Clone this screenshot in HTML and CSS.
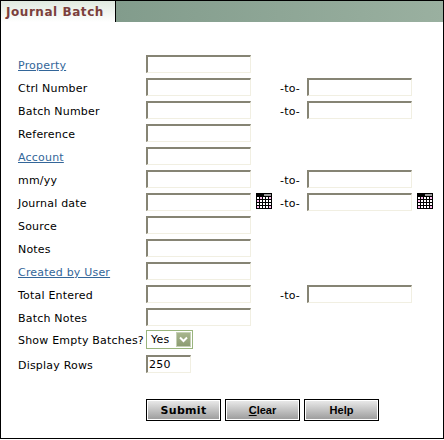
FILE: index.html
```html
<!DOCTYPE html>
<html lang="en">
<head>
<meta charset="utf-8">
<title>Journal Batch</title>
<link rel="stylesheet" href="styles.css">
</head>
<body>
<svg width="0" height="0" class="defs">
  <symbol id="cal" viewBox="0 0 16 16">
    <rect width="16" height="16" fill="#000"/>
    <rect x="8" y="1" width="7" height="2" fill="#999"/>
    <g fill="#fff">
      <rect x="1" y="4" width="2" height="2"/><rect x="4" y="4" width="2" height="2" fill="#fbe"/><rect x="7" y="4" width="2" height="2"/><rect x="10" y="4" width="2" height="2"/><rect x="13" y="4" width="2" height="2" fill="#fbe"/>
      <rect x="1" y="7" width="2" height="2" fill="#fbe"/><rect x="4" y="7" width="2" height="2"/><rect x="7" y="7" width="2" height="2"/><rect x="10" y="7" width="2" height="2"/><rect x="13" y="7" width="2" height="2"/>
      <rect x="1" y="10" width="2" height="2"/><rect x="4" y="10" width="2" height="2"/><rect x="7" y="10" width="2" height="2"/><rect x="10" y="10" width="2" height="2"/><rect x="13" y="10" width="2" height="2"/>
      <rect x="1" y="13" width="2" height="2" fill="#fbe"/><rect x="4" y="13" width="2" height="2"/><rect x="7" y="13" width="2" height="2"/><rect x="10" y="13" width="2" height="2"/><rect x="13" y="13" width="2" height="2" fill="#fbe"/>
    </g>
  </symbol>
</svg>
<div class="panel">
  <header class="tabbar">
    <h1 class="tab">Journal Batch</h1>
    <div class="tabfill"></div>
  </header>
  <form class="form">
    <a class="label link" href="#">Property</a><span class="field"><span class="input"></span></span>

    <span class="label">Ctrl Number</span><span class="field"><span class="input"></span></span><span class="to">-to-</span><span class="field"><span class="input"></span></span>

    <span class="label">Batch Number</span><span class="field"><span class="input"></span></span><span class="to">-to-</span><span class="field"><span class="input"></span></span>

    <span class="label">Reference</span><span class="field"><span class="input"></span></span>

    <a class="label link" href="#">Account</a><span class="field"><span class="input"></span></span>

    <span class="label">mm/yy</span><span class="field"><span class="input"></span></span><span class="to">-to-</span><span class="field"><span class="input"></span></span>

    <span class="label">Journal date</span><span class="field"><span class="input"></span><svg class="cal"><use href="#cal"/></svg></span><span class="to">-to-</span><span class="field"><span class="input"></span><svg class="cal"><use href="#cal"/></svg></span>

    <span class="label">Source</span><span class="field"><span class="input"></span></span>

    <span class="label">Notes</span><span class="field"><span class="input"></span></span>

    <a class="label link" href="#">Created by User</a><span class="field"><span class="input"></span></span>

    <span class="label">Total Entered</span><span class="field"><span class="input"></span></span><span class="to">-to-</span><span class="field"><span class="input"></span></span>

    <span class="label">Batch Notes</span><span class="field"><span class="input"></span></span>

    <span class="label label-select">Show Empty Batches?</span>
    <span class="field"><span class="select">Yes<span class="arrow"><svg width="9" height="7" viewBox="0 0 9 7"><path d="M1 1.5l3.5 3.5 3.5-3.5" fill="none" stroke="#fff" stroke-width="2"/></svg></span></span></span>

    <span class="label label-last">Display Rows</span><span class="field field-last"><span class="input short">250</span></span>
  </form>
  <div class="buttons">
    <span class="btn btn-wide">Submit</span>
    <span class="btn"><u>C</u>lear</span>
    <span class="btn">Help</span>
  </div>
</div>
</body>
</html>
```
FILE: styles.css
```css
html, body {
  margin: 0;
  padding: 0;
  background: #fff;
}
.defs {
  position: absolute;
}
.panel {
  box-sizing: border-box;
  width: 444px;
  height: 439px;
  border: 1px solid #000;
  font-family: "DejaVu Sans", Verdana, sans-serif;
  font-size: 11px;
  letter-spacing: 0.2px;
  color: #000;
  background: #fff;
}
.tabbar {
  display: flex;
  height: 21px;
}
.tab {
  box-sizing: border-box;
  width: 115px;
  height: 21px;
  margin: 0;
  padding: 3px 0 0 5px;
  border-right: 1px solid #000;
  font-size: 12px;
  letter-spacing: 0.55px;
  line-height: 16px;
  font-weight: bold;
  color: #7b3f3c;
  white-space: nowrap;
  background: linear-gradient(#dfe9df, #ffffff);
}
.tabfill {
  flex: 1;
  background: linear-gradient(90deg, #829c8c, #9ab0a0);
}
.form {
  display: grid;
  grid-template-columns: 128px 134px 27px 137px;
  grid-auto-rows: 23px;
  padding: 33px 0 0 17px;
}
.label {
  grid-column: 1;
  height: 18px;
  line-height: 22px;
  white-space: nowrap;
}
.label-select {
  line-height: 20px;
}
.label-last,
.field-last {
  margin-top: 1px;
}
.link {
  width: max-content;
  color: #336699;
  text-decoration: underline;
}
.field {
  display: flex;
  align-items: flex-start;
  gap: 5px;
}
.label + .field {
  grid-column: 2;
}
.to {
  grid-column: 3;
  height: 18px;
  line-height: 21px;
}
.input {
  box-sizing: border-box;
  display: block;
  width: 105px;
  height: 18px;
  padding-left: 1px;
  line-height: 15px;
  border-style: solid;
  border-width: 2px 1px 1px 2px;
  border-color: #868474 #f1efe2 #f1efe2 #868474;
  background: #fff;
}
.short {
  width: 45px;
}
.cal {
  width: 16px;
  height: 16px;
}
.select {
  box-sizing: border-box;
  display: flex;
  align-items: center;
  justify-content: space-between;
  width: 47px;
  height: 19px;
  margin-top: -1px;
  padding: 0 1px 0 4px;
  border: 1px solid #9ab57e;
}
.arrow {
  display: flex;
  align-items: center;
  justify-content: center;
  width: 15px;
  height: 15px;
  border: 1px solid #c4d0b4;
  box-sizing: border-box;
  background: linear-gradient(#a7b58e, #8c9c72);
}
.buttons {
  display: flex;
  gap: 4px;
  padding: 22px 0 0 145px;
}
.btn {
  box-sizing: border-box;
  width: 75px;
  height: 22px;
  border: 1px solid #000;
  box-shadow: inset 0 0 0 1px #fff;
  background: linear-gradient(#ececec, #9a9a9a);
  text-align: center;
  font-family: "Liberation Sans", Arial, sans-serif;
  font-weight: bold;
  font-size: 11px;
  letter-spacing: 0;
  line-height: 21px;
}
.btn-wide {
  font-family: "DejaVu Sans", Verdana, sans-serif;
  font-size: 11px;
  letter-spacing: 0.3px;
}
```
